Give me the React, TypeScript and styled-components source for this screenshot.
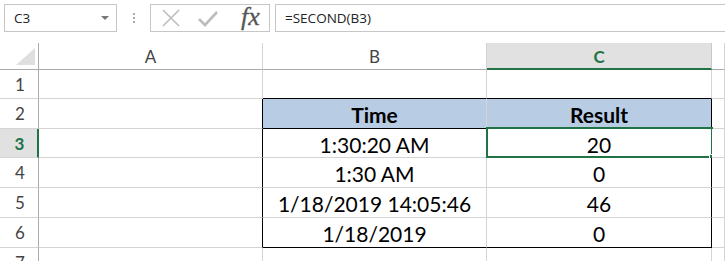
import React, { FC } from 'react';
import styled, { createGlobalStyle } from 'styled-components';

const GlobalStyle = createGlobalStyle`
  body {
    margin: 0;
    background: #fff;
    font-family: "Open Sans", "Liberation Sans", sans-serif;
  }
  * { box-sizing: border-box; }
`

const Page = styled.div`
  width: 725px;
  height: 261px;
  overflow: hidden;
  background: #fff;
`

const FormulaBar = styled.div`
  display: flex;
  align-items: stretch;
  height: 28px;
  margin: 4px 0 0 4px;
`

const NameBox = styled.div`
  width: 113px;
  border: 1px solid #c6c6c6;
  display: flex;
  align-items: center;
  justify-content: space-between;
  padding: 0 7px 0 9px;
  font-size: 13.5px;
  color: #222;
`

const DropArrow = styled.span`
  width: 0;
  height: 0;
  border-left: 4px solid transparent;
  border-right: 4px solid transparent;
  border-top: 4px solid #777;
`

const Dots = styled.div`
  width: 33px;
  display: flex;
  flex-direction: column;
  align-items: center;
  justify-content: center;
  gap: 2px;

  & > span {
    width: 2px;
    height: 2px;
    background: #aaa;
  }
`

const IconBox = styled.div`
  width: 120px;
  border: 1px solid #c6c6c6;
  display: flex;
  align-items: center;
  padding: 0 6px 0 10px;
  gap: 16px;
`

const Fx = styled.span`
  font-family: "Liberation Serif", serif;
  font-style: italic;
  font-size: 26px;
  line-height: 1;
  color: #555;
  margin-left: 6px;
  padding-bottom: 2px;
  -webkit-text-stroke: 0.3px #555;
`

const FormulaInput = styled.div`
  flex: 1;
  margin-left: 5px;
  border: 1px solid #c6c6c6;
  border-right: 0;
  display: flex;
  align-items: center;
  padding-left: 9px;
  font-size: 13.5px;
  color: #222;
`

const Sheet = styled.div`
  margin-top: 11px;
  display: grid;
  grid-template-columns: 39px 224px 224px 225px 13px;
  grid-template-rows: 27px 29px 30px 29px 30px 30px 30px 30px;
`

const Corner = styled.div`
  border-right: 1px solid #ababab;
  border-bottom: 1px solid #ababab;
  display: flex;
  align-items: flex-end;
  justify-content: flex-end;
  padding: 0 3px 4px 0;
`

const ColHead = styled.div<{ $active?: boolean }>`
  background: ${p => (p.$active ? '#e1e1e1' : '#fff')};
  border-right: 1px solid ${p => (p.$active ? '#c8c8c8' : '#d4d4d4')};
  border-bottom: ${p => (p.$active ? '2px solid #217346' : '1px solid #ababab')};
  color: ${p => (p.$active ? '#217346' : '#444')};
  font-weight: ${p => (p.$active ? 700 : 400)};
  font-family: "Lato", "Liberation Sans", sans-serif;
  font-size: 17px;
  display: flex;
  align-items: center;
  justify-content: center;
  padding-top: ${p => (p.$active ? '1px' : '0')};
`

const RowHead = styled.div<{ $active?: boolean }>`
  background: ${p => (p.$active ? '#e1e1e1' : '#fff')};
  border-right: ${p => (p.$active ? '2px solid #217346' : '1px solid #ababab')};
  border-bottom: 1px solid #d4d4d4;
  color: ${p => (p.$active ? '#217346' : '#444')};
  font-weight: ${p => (p.$active ? 700 : 400)};
  font-family: "Lato", "Liberation Sans", sans-serif;
  font-size: 17px;
  display: flex;
  align-items: center;
  justify-content: center;
  padding-left: 2px;
`

const Cell = styled.div<{ $right?: string; $bottom?: string; $fill?: string; $bold?: boolean }>`
  position: relative;
  background: ${p => p.$fill || '#fff'};
  border-right: 1px solid ${p => p.$right || '#d4d4d4'};
  border-bottom: 1px solid ${p => p.$bottom || '#d4d4d4'};
  font-family: "Lato", "Carlito", "Liberation Sans", sans-serif;
  font-size: 21px;
  font-weight: ${p => (p.$bold ? 700 : 400)};
  color: #000;
  display: flex;
  align-items: center;
  justify-content: center;
  padding-top: 2px;
`

const Selection = styled.div`
  position: absolute;
  left: -1px;
  top: -2px;
  right: -2px;
  bottom: -1px;
  border: 2px solid #217346;
  pointer-events: none;
`

const Handle = styled.div`
  position: absolute;
  right: -4px;
  bottom: -4px;
  width: 6px;
  height: 6px;
  background: #217346;
  border: 1px solid #fff;
`

const BLACK = '#000'

const rows = [
  { time: '1:30:20 AM', result: '20' },
  { time: '1:30 AM', result: '0' },
  { time: '1/18/2019 14:05:46', result: '46' },
  { time: '1/18/2019', result: '0' },
]

const App: FC = () => {
  return <Page>
    <GlobalStyle />
    <FormulaBar>
      <NameBox>C3<DropArrow /></NameBox>
      <Dots><span /><span /><span /></Dots>
      <IconBox>
        <svg width="20" height="20" viewBox="0 0 20 20">
          <path d="M2 2 L18 18 M18 2 L2 18" stroke="#bdbdbd" strokeWidth="1.6" fill="none" />
        </svg>
        <svg width="22" height="20" viewBox="0 0 22 20">
          <path d="M2 11 L8 17 L20 4" stroke="#bdbdbd" strokeWidth="2.6" fill="none" />
        </svg>
        <Fx>fx</Fx>
      </IconBox>
      <FormulaInput>=SECOND(B3)</FormulaInput>
    </FormulaBar>

    <Sheet>
      <Corner>
        <svg width="19" height="17" viewBox="0 0 19 17">
          <polygon points="19,0 19,17 0,17" fill="#dfdfdf" />
        </svg>
      </Corner>
      <ColHead>A</ColHead>
      <ColHead>B</ColHead>
      <ColHead $active>C</ColHead>
      <ColHead />

      <RowHead>1</RowHead>
      <Cell />
      <Cell $bottom={BLACK} />
      <Cell $bottom={BLACK} />
      <Cell />

      <RowHead>2</RowHead>
      <Cell $right={BLACK} />
      <Cell $fill="#b8cce4" $bottom={BLACK} $bold>Time</Cell>
      <Cell $fill="#b8cce4" $bottom={BLACK} $right={BLACK} $bold>Result</Cell>
      <Cell />

      {rows.map((r, i) => {
        const last = i === rows.length - 1
        return <React.Fragment key={i}>
          <RowHead $active={i === 0}>{i + 3}</RowHead>
          <Cell $right={BLACK} />
          <Cell $bottom={last ? BLACK : undefined}>{r.time}</Cell>
          <Cell $bottom={last ? BLACK : undefined} $right={BLACK}>
            {r.result}
            {i === 0 && <Selection><Handle /></Selection>}
          </Cell>
          <Cell />
        </React.Fragment>
      })}

      <RowHead>7</RowHead>
      <Cell />
      <Cell />
      <Cell />
      <Cell />
    </Sheet>
  </Page>
}

export default App
